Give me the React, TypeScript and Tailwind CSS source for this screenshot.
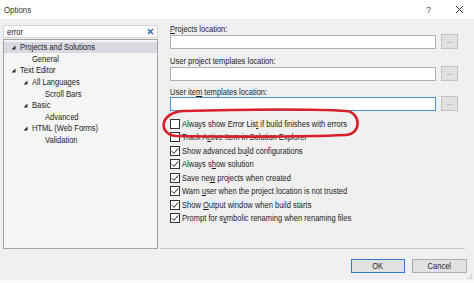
import React from "react";

const treeRows: { label: string; level: number; expand: boolean; selected?: boolean }[] = [
  { label: "Projects and Solutions", level: 0, expand: true, selected: true },
  { label: "General", level: 1, expand: false },
  { label: "Text Editor", level: 0, expand: true },
  { label: "All Languages", level: 1, expand: true },
  { label: "Scroll Bars", level: 2, expand: false },
  { label: "Basic", level: 1, expand: true },
  { label: "Advanced", level: 2, expand: false },
  { label: "HTML (Web Forms)", level: 1, expand: true },
  { label: "Validation", level: 2, expand: false },
];

const padByLevel = ["pl-[6px]", "pl-[18px]", "pl-[31px]"];

function T({ children, center }: { children: React.ReactNode; center?: boolean }) {
  return (
    <span
      className={
        center
          ? "inline-block whitespace-nowrap origin-center scale-x-[0.82]"
          : "inline-block whitespace-nowrap origin-left scale-x-[0.82]"
      }
    >
      {children}
    </span>
  );
}

function U({ children }: { children: React.ReactNode }) {
  return <span className="underline underline-offset-[1px]">{children}</span>;
}

function Check({ checked }: { checked: boolean }) {
  return (
    <div className="w-[10px] h-[10px] border border-[#333333] bg-white flex items-center justify-center shrink-0">
      {checked && (
        <svg width="8" height="8" viewBox="0 0 8 8">
          <path d="M0.8 4.2 L3 6.4 L7.2 1.4" fill="none" stroke="#222" strokeWidth="1" />
        </svg>
      )}
    </div>
  );
}

const checks: { checked: boolean; label: React.ReactNode }[] = [
  { checked: false, label: <>Always show Error Lis<U>t</U> if build finishes with errors</> },
  { checked: false, label: <>Track A<U>c</U>tive Item in Solution Explorer</> },
  { checked: true, label: <>Show advanced bu<U>i</U>ld configurations</> },
  { checked: true, label: <>Always s<U>h</U>ow solution</> },
  { checked: true, label: <>Save ne<U>w</U> projects when created</> },
  { checked: true, label: <>Warn <U>u</U>ser when the project location is not trusted</> },
  { checked: true, label: <>Show <U>O</U>utput window when build starts</> },
  { checked: true, label: <>Prompt for s<U>y</U>mbolic renaming when renaming files</> },
];

function PathRow({ focused }: { focused?: boolean }) {
  return (
    <div className="flex items-start">
      <div
        className={
          focused
            ? "w-[266px] h-[14px] bg-white border border-[#4c93d6]"
            : "w-[266px] h-[14px] bg-white border border-[#b0b0b0]"
        }
      />
      <div className="ml-[5px] -mt-[1px] w-[17px] h-[15px] bg-[#e1e1e1] border border-[#c2c2c2] flex items-center justify-center text-[7px] leading-none text-[#666] pb-[3px]">
        ...
      </div>
    </div>
  );
}

export default function App() {
  return (
    <div className="w-[474px] h-[283px] bg-[#f0f0f0] relative overflow-hidden flex flex-col text-[#1b1b1b] text-[9.2px] leading-[10px] font-['Liberation_Sans',Arial,sans-serif]">
      {/* title bar */}
      <div className="h-[19px] bg-white flex items-center shrink-0">
        <div className="pl-[4px] text-[9.6px] text-[#333]">
          <T>Options</T>
        </div>
        <div className="ml-auto flex items-center">
          <div className="text-[9px] text-[#444] mr-[24px]">?</div>
          <svg width="9" height="9" viewBox="0 0 9 9" className="mr-[10px]">
            <path d="M1 1 L8 8 M8 1 L1 8" stroke="#333" strokeWidth="1" />
          </svg>
        </div>
      </div>

      {/* body */}
      <div className="flex pt-[5px] pl-[3px] flex-1">
        {/* left column */}
        <div className="w-[155px] flex flex-col mt-[1px]">
          <div className="h-[13px] bg-white border border-[#d6d6d6] flex items-center pl-[3px] pr-[3px]">
            <T>error</T>
            <svg width="7" height="7" viewBox="0 0 7 7" className="ml-auto">
              <path d="M1 1 L6 6 M6 1 L1 6" stroke="#2f6fb8" strokeWidth="1.5" />
            </svg>
          </div>
          <div className="mt-[1px] h-[210px] bg-[#f5f5f5] border border-[#a3a3a3] pt-[1.5px]">
            {treeRows.map((r) => (
              <div
                key={r.label}
                className={
                  (r.selected ? "bg-[#d9d9e4] " : "") +
                  "h-[11.6px] flex items-center " +
                  padByLevel[r.level]
                }
              >
                <div className="w-[10px] flex items-center">
                  {r.expand && (
                    <svg width="5" height="5" viewBox="0 0 5 5" className="ml-[1px]">
                      <polygon points="4.5,0.5 4.5,4.5 0.5,4.5" fill="#2a2a2a" />
                    </svg>
                  )}
                </div>
                <T>{r.label}</T>
              </div>
            ))}
          </div>
        </div>

        {/* right column */}
        <div className="ml-[2px] w-[307px] flex flex-col">
          <div className="pl-[10px] flex flex-col">
            <div className="h-[10px] leading-[10px]">
              <T>
                <U>P</U>rojects location:
              </T>
            </div>
            <div className="mt-[1px]">
              <PathRow />
            </div>
            <div className="mt-[7px] h-[10px] leading-[10px]">
              <T>
                User pro<U>j</U>ect templates location:
              </T>
            </div>
            <div className="mt-[1px]">
              <PathRow />
            </div>
            <div className="mt-[6px] h-[10px] leading-[10px]">
              <T>
                User ite<U>m</U> templates location:
              </T>
            </div>
            <div>
              <PathRow focused />
            </div>
            <div className="mt-[6px] flex flex-col">
              {checks.map((c, i) => (
                <div key={i} className="h-[13.5px] flex items-center">
                  <Check checked={c.checked} />
                  <span className="ml-[2px]">
                    <T>{c.label}</T>
                  </span>
                </div>
              ))}
            </div>
          </div>
          <div className="mt-[23px] h-px bg-[#c4c4c4] mr-[2px]" />
          <div className="mt-[10px] flex justify-end gap-[7px]">
            <div className="w-[54px] h-[14px] bg-[#e1e1e1] border border-[#2f7bd0] flex items-center justify-center">
              <T center>OK</T>
            </div>
            <div className="w-[55px] h-[14px] bg-[#e1e1e1] border border-[#adadad] flex items-center justify-center">
              <T center>Cancel</T>
            </div>
          </div>
        </div>
      </div>

      <div className="h-[3px] bg-[#fafafa] shrink-0" />

      {/* resize grip */}
      <svg width="6" height="6" viewBox="0 0 6 6" className="absolute right-[1px] bottom-[3px]">
        <rect x="4" y="0" width="1" height="1" fill="#b8b8b8" />
        <rect x="2" y="2" width="1" height="1" fill="#b8b8b8" />
        <rect x="4" y="2" width="1" height="1" fill="#b8b8b8" />
        <rect x="0" y="4" width="1" height="1" fill="#b8b8b8" />
        <rect x="2" y="4" width="1" height="1" fill="#b8b8b8" />
        <rect x="4" y="4" width="1" height="1" fill="#b8b8b8" />
      </svg>

      {/* red annotation */}
      <svg
        width="210"
        height="34"
        viewBox="0 0 210 34"
        className="absolute left-[158px] top-[107px] pointer-events-none"
      >
        <path
          d="M25 4 C90 2, 160 2, 188 4 C203 5, 204 27, 188 28 C140 30, 60 30, 18 29 C1 28, 0 6, 25 4 Z"
          fill="none"
          stroke="#d8202a"
          strokeWidth="2.6"
        />
      </svg>
    </div>
  );
}
